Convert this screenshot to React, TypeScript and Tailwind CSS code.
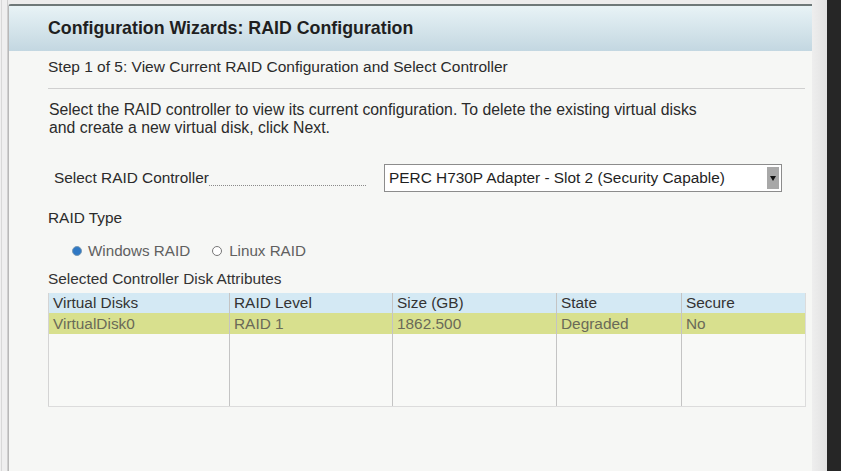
import React from "react";

const font = { fontFamily: '"Liberation Sans", Arial, sans-serif' };

export default function App() {
  const cols = [
    { w: "w-[181px]", h: "Virtual Disks", v: "VirtualDisk0" },
    { w: "w-[163px]", h: "RAID Level", v: "RAID 1" },
    { w: "w-[164px]", h: "Size (GB)", v: "1862.500" },
    { w: "w-[125px]", h: "State", v: "Degraded" },
    { w: "flex-1", h: "Secure", v: "No" },
  ];
  return (
    <div
      className="w-[841px] h-[471px] flex bg-[#ececec] overflow-hidden text-[#2b2b2b]"
      style={font}
    >
      {/* left strip */}
      <div className="w-[8px] h-full flex flex-col border-r border-[#cfcfcf] bg-[#efefef]">
        <div className="w-[2px] h-full border-r border-[#d8d8d8]" />
      </div>
      {/* panel */}
      <div className="w-[804px] mt-[4px] flex flex-col bg-[#f6f7f5] border-t-2 border-[#6e7878] rounded-tl-[3px] border-l border-l-[#b8b8b8]">
        <div className="h-[45px] flex items-center pl-[39px] bg-gradient-to-b from-[#e8f3f6] to-[#c3d7e1]">
          <span className="text-[17.8px] font-bold text-[#1f1f1f]">
            Configuration Wizards: RAID Configuration
          </span>
        </div>
        <div className="h-[32px] flex items-center pl-[39px] text-[15.5px]">
          Step 1 of 5: View Current RAID Configuration and Select Controller
        </div>
        <div className="mt-[5px] ml-[39px] mr-[7px] border-t border-[#d0d0d0]" />
        <div className="mt-[12px] pl-[40px] text-[15.8px] leading-[18px]">
          <div>
            Select the RAID controller to view its current configuration. To
            delete the existing virtual disks
          </div>
          <div>and create a new virtual disk, click Next.</div>
        </div>
        <div className="mt-[27px] h-[28px] flex items-center">
          <div className="ml-[45px] w-[312px] flex items-end text-[15.4px]">
            <span>Select RAID Controller</span>
            <span className="flex-1 border-b border-dotted border-[#8a8a8a] mb-[4px]" />
          </div>
          <div className="ml-[18px] w-[398px] h-[28px] flex items-center border border-[#8c8c8c] bg-white pl-[4px] pr-[2px] text-[15.4px] text-[#1f1f1f]">
            <span className="flex-1">PERC H730P Adapter - Slot 2 (Security Capable)</span>
            <div className="w-[12px] h-[22px] bg-[#a8a8a8] flex items-center justify-center">
              <svg width="6" height="5" viewBox="0 0 6 5">
                <path d="M0 0 L6 0 L3 5 Z" fill="#111" />
              </svg>
            </div>
          </div>
        </div>
        <div className="mt-[17px] pl-[39px] text-[15.4px] leading-[18px]">RAID Type</div>
        <div className="mt-[15px] pl-[63px] flex items-center text-[15.2px] leading-[18px] text-[#606060]">
          <span className="w-[10px] h-[10px] rounded-full border border-[#7a9bb5] bg-[#2f78c4] mr-[6px]" />
          <span>Windows RAID</span>
          <span className="ml-[22px] w-[10px] h-[10px] rounded-full border border-[#777] bg-white mr-[7px]" />
          <span>Linux RAID</span>
        </div>
        <div className="mt-[10px] pl-[39px] text-[15.4px] leading-[18px] text-[#333]">
          Selected Controller Disk Attributes
        </div>
        <div className="mt-[5px] ml-[39px] mr-[6px] flex border-b border-[#dcdcdc]">
          {cols.map((c, i) => (
            <div
              key={i}
              className={`${c.w} flex flex-col ${i > 0 ? "border-l border-[#c4c4c4]" : "border-l border-[#d4d4d4]"} ${i === cols.length - 1 ? "border-r border-r-[#dcdcdc]" : ""}`}
            >
              <div className="h-[20px] bg-[#d4e9f4] px-[4px] flex items-center text-[15.4px] text-[#333]">
                {c.h}
              </div>
              <div className="h-[21px] bg-[#d8e08e] px-[4px] flex items-center text-[15.4px] text-[#6a6a58]">
                {c.v}
              </div>
              <div className="h-[72px] bg-[#f8f9f7]" />
            </div>
          ))}
        </div>
      </div>
      {/* right gutter */}
      <div className="w-[15px] h-full bg-gradient-to-r from-[#eeeeee] to-[#e2e2e2]" />
      <div className="flex-1 h-full bg-[#262626]" />
    </div>
  );
}
